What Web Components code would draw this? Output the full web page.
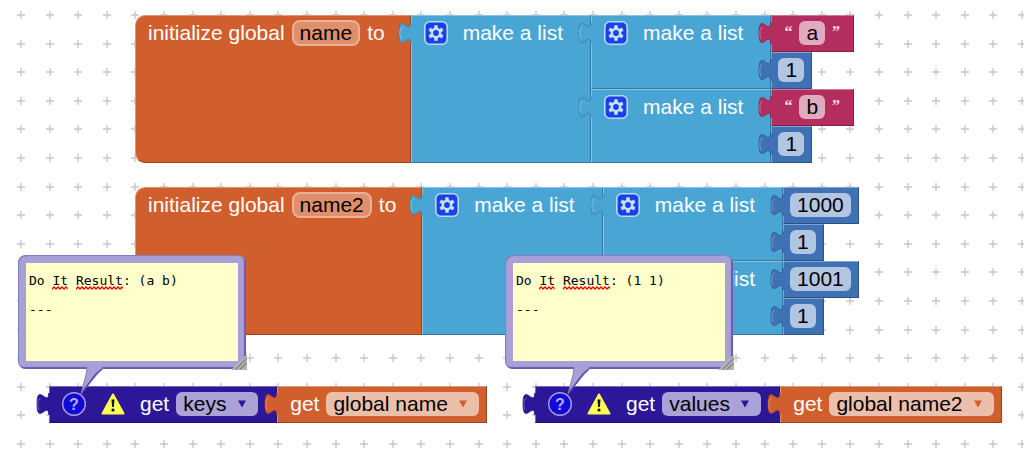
<!DOCTYPE html>
<html lang="en">
<head>
  <meta charset="utf-8">
  <meta name="viewport" content="width=device-width, initial-scale=1">
  <title>Blocks workspace</title>
  <style>
    body {
      margin: 0;
      font-family: "Liberation Sans", Arial, sans-serif;
    }

    /* where each top level item was dropped on the workspace */
    #init-name { left: 135px; top: 15px; }
    #init-name2 { left: 135px; top: 187px; }
    #get-keys { left: 49px; top: 386px; }
    #get-values { left: 535px; top: 386px; }
    #note-keys { left: 18px; top: 255px; }
    #note-values { left: 505px; top: 255px; }
  </style>
</head>
<body>
  <block-workspace>
    <code-block id="init-name" kind="global" hat>
      initialize global <block-field value="name" label="Variable name" outlined></block-field> to
      <code-block slot="input" kind="list">
        <block-icon name="gear"></block-icon> make a list
        <code-block slot="input" kind="list">
          <block-icon name="gear"></block-icon> make a list
          <code-block slot="input" kind="text"><block-quote>“</block-quote><block-field value="a" label="Text"></block-field><block-quote>”</block-quote></code-block>
          <code-block slot="input" kind="number"><block-field value="1" label="Number"></block-field></code-block>
        </code-block>
        <code-block slot="input" kind="list">
          <block-icon name="gear"></block-icon> make a list
          <code-block slot="input" kind="text"><block-quote>“</block-quote><block-field value="b" label="Text"></block-field><block-quote>”</block-quote></code-block>
          <code-block slot="input" kind="number"><block-field value="1" label="Number"></block-field></code-block>
        </code-block>
      </code-block>
    </code-block>

    <code-block id="init-name2" kind="global" hat>
      initialize global <block-field value="name2" label="Variable name" outlined></block-field> to
      <code-block slot="input" kind="list">
        <block-icon name="gear"></block-icon> make a list
        <code-block slot="input" kind="list">
          <block-icon name="gear"></block-icon> make a list
          <code-block slot="input" kind="number"><block-field value="1000" label="Number"></block-field></code-block>
          <code-block slot="input" kind="number"><block-field value="1" label="Number"></block-field></code-block>
        </code-block>
        <code-block slot="input" kind="list">
          <block-icon name="gear"></block-icon> make a list
          <code-block slot="input" kind="number"><block-field value="1001" label="Number"></block-field></code-block>
          <code-block slot="input" kind="number"><block-field value="1" label="Number"></block-field></code-block>
        </code-block>
      </code-block>
    </code-block>

    <code-block id="get-keys" kind="dictionary">
      <block-icon name="help"></block-icon><block-icon name="warning"></block-icon> get
      <block-menu value="keys" label="Dictionary part"></block-menu>
      <code-block slot="input" kind="getter">get <block-menu value="global name" label="Variable"></block-menu></code-block>
    </code-block>

    <code-block id="get-values" kind="dictionary">
      <block-icon name="help"></block-icon><block-icon name="warning"></block-icon> get
      <block-menu value="values" label="Dictionary part"></block-menu>
      <code-block slot="input" kind="getter">get <block-menu value="global name2" label="Variable"></block-menu></code-block>
    </code-block>

    <comment-bubble id="note-keys" flagged="It,Result" text="Do It Result: (a b)&#10;---"></comment-bubble>
    <comment-bubble id="note-values" flagged="It,Result" text="Do It Result: (1 1)&#10;---"></comment-bubble>
  </block-workspace>

  <script>
    class BlockWorkspace extends HTMLElement {
      constructor() {
        super();
        this.attachShadow({ mode: 'open' });
      }

      connectedCallback() {
        // five grid steps fit in one 143px tile
        const steps = [6, 35, 63, 92, 120];
        let crosses = '';
        steps.forEach((y) => {
          steps.forEach((x) => {
            crosses += `M${x - 3} ${y}h8M${x + 1} ${y - 4}v8`;
          });
        });

        this.shadowRoot.innerHTML = `
          <style>
            :host {
              display: block;
              position: relative;
              min-height: 100vh;
              overflow: hidden;
              background: #fff;
            }

            .grid {
              position: absolute;
              inset: 0;
              width: 100%;
              height: 100%;
            }

            ::slotted(*) {
              position: absolute;
            }
          </style>
          <svg class="grid" aria-hidden="true">
            <defs>
              <pattern id="tile" x="14" y="9" width="143" height="143" patternUnits="userSpaceOnUse">
                <path d="${crosses}" stroke="#c8c8c8" stroke-width="1.4" fill="none"/>
              </pattern>
            </defs>
            <rect width="100%" height="100%" fill="url(#tile)"/>
          </svg>
          <slot></slot>
        `;
      }
    }

    class CodeBlock extends HTMLElement {
      constructor() {
        super();
        this.attachShadow({ mode: 'open' });
      }

      connectedCallback() {
        this.shadowRoot.innerHTML = `
          <style>
            :host {
              display: flex;
              position: relative;
              color: #fff;
              font-size: 21px;
              line-height: 24px;
              white-space: nowrap;
              --light: color-mix(in srgb, var(--fill) 65%, white);
              --dark: color-mix(in srgb, var(--fill) 72%, black);
              --field: color-mix(in srgb, var(--fill) 40%, white);
            }

            :host([kind="global"]) { --fill: #d05f2d; --field: #e08f6c; --end: 25px; }
            :host([kind="list"]) { --fill: #49a6d4; --end: 27px; }
            :host([kind="text"]) { --fill: #b32d5e; --end: 13px; }
            :host([kind="number"]) { --fill: #3f71b5; --start: 6px; --end: 7px; }
            :host([kind="dictionary"]) { --fill: #2d1799; --field: #aba2d8; --end: 18px; }
            :host([kind="getter"]) { --fill: #d05f2d; --end: 7px; }

            .head {
              display: flex;
              flex: 1;
              align-items: flex-start;
              gap: 7px;
              box-sizing: border-box;
              min-height: 37px;
              padding: 4px var(--end) 5px var(--start, 12px);
              border: 1px solid;
              border-color: var(--light) var(--dark) var(--dark) var(--light);
              background: var(--fill);
            }

            :host([hat]) .head {
              border-radius: 10px 0 0 10px;
            }

            .inputs {
              display: flex;
              flex-direction: column;
              align-items: flex-start;
            }

            .tab {
              position: absolute;
              left: -12px;
              top: 7px;
              width: 13px;
              height: 22px;
              overflow: visible;
            }

            :host(:not([slot="input"]):not([kind="dictionary"])) .tab {
              display: none;
            }
          </style>
          <div class="head"><slot></slot></div>
          <div class="inputs"><slot name="input"></slot></div>
          <svg class="tab" viewBox="-8 5 9 15" aria-hidden="true">
            <path d="M1.4 5H0c0 10-8-8-8 7.500s8-2.500 8 7.500h1.400z" fill="var(--fill)"/>
            <path d="M0 5c0 10-8-8-8 7.500s8-2.500 8 7.500" fill="none" stroke="var(--dark)" stroke-width=".5"/>
            <path d="M-5.500 8.800C-7 8.800-7.400 10-7.400 12.500q0 3 .8 4.200" fill="none" stroke="var(--light)" stroke-width=".6"/>
          </svg>
        `;
        this.wrapLabels();
      }

      // bare text becomes a span so each label is one flex item
      wrapLabels() {
        [...this.childNodes].forEach((node) => {
          if (node.nodeType !== Node.TEXT_NODE) return;
          const text = node.textContent.trim();
          if (!text) return;
          const span = document.createElement('span');
          span.textContent = text;
          span.style.paddingTop = '1px';
          node.replaceWith(span);
        });
      }
    }

    class BlockField extends HTMLElement {
      constructor() {
        super();
        this.attachShadow({ mode: 'open' });
      }

      connectedCallback() {
        this.shadowRoot.innerHTML = `
          <style>
            :host {
              display: block;
              padding-top: 1px;
            }

            :host([outlined]) {
              padding-top: 0;
            }

            input {
              display: block;
              box-sizing: border-box;
              field-sizing: content;
              height: 24px;
              margin: 0;
              padding: 0 7px;
              border: 0;
              border-radius: 6px;
              outline: 0;
              background: var(--field);
              color: #000;
              font: inherit;
              text-align: center;
            }

            :host([outlined]) input {
              height: 26px;
              padding: 0 6px;
              border: 2px solid #eab197;
              border-radius: 8px;
            }

            input:focus {
              box-shadow: 0 0 0 2px #fc3;
            }
          </style>
          <input type="text" value="${this.getAttribute('value')}" aria-label="${this.getAttribute('label')}" spellcheck="false">
        `;
      }
    }

    class BlockMenu extends HTMLElement {
      constructor() {
        super();
        this.attachShadow({ mode: 'open' });
      }

      connectedCallback() {
        this.shadowRoot.innerHTML = `
          <style>
            :host {
              display: grid;
              align-items: center;
              padding-top: 1px;
            }

            select,
            svg {
              grid-area: 1 / 1;
            }

            select {
              appearance: none;
              height: 24px;
              margin: 0;
              padding: 0 31px 0 7px;
              border: 0;
              border-radius: 6px;
              outline: 0;
              background: var(--field);
              color: #000;
              font: inherit;
              cursor: pointer;
            }

            svg {
              justify-self: end;
              width: 8px;
              height: 8px;
              margin-right: 12px;
              pointer-events: none;
            }
          </style>
          <select aria-label="${this.getAttribute('label')}"><option>${this.getAttribute('value')}</option></select>
          <svg viewBox="0 0 8 8" aria-hidden="true"><path d="M0 .5h8L4 7.500z" fill="var(--fill)"/></svg>
        `;
      }
    }

    class BlockQuote extends HTMLElement {
      constructor() {
        super();
        this.attachShadow({ mode: 'open' });
      }

      connectedCallback() {
        this.shadowRoot.innerHTML = `
          <style>
            :host {
              display: block;
              color: #f6dfe8;
              font-family: "Liberation Serif", "Times New Roman", serif;
              font-size: 16px;
              font-weight: bold;
            }
          </style>
          <slot></slot>
        `;
      }
    }

    const teeth = [0, 60, 120, 180, 240, 300]
      .map((angle) => `<path d="M10.200 8l.5-3.500h2.600l.5 3.500z" transform="rotate(${angle} 12 12)"/>`)
      .join('');

    const icons = {
      gear: `
        <rect x=".8" y=".8" width="22.400" height="22.400" rx="5" fill="#1b3fe8" stroke="#b5dcf0" stroke-width="1.600"/>
        <g fill="#c5e4f5" stroke="#c5e4f5" stroke-width=".6" stroke-linejoin="round">${teeth}<circle cx="12" cy="12" r="5"/></g>
        <circle cx="12" cy="12" r="2.900" fill="#1b3fe8"/>
      `,
      help: `
        <circle cx="12" cy="12" r="11.300" fill="#1008dc" stroke="#aba2d8" stroke-width="1.400"/>
        <text x="12" y="17.500" text-anchor="middle" font-size="16" font-weight="bold" fill="#b8b0e4">?</text>
      `,
      warning: `
        <path d="M12 2.500L22.500 21.500H1.500z" fill="#ffff52" stroke="#ffff52" stroke-width="2" stroke-linejoin="round"/>
        <path d="M10.500 7.500h3l-.6 7.500h-1.800z" fill="#111"/>
        <circle cx="12" cy="18" r="1.600" fill="#111"/>
      `
    };

    class BlockIcon extends HTMLElement {
      constructor() {
        super();
        this.attachShadow({ mode: 'open' });
      }

      connectedCallback() {
        this.shadowRoot.innerHTML = `
          <style>
            :host {
              display: block;
              margin-right: 8px;
              padding-top: 1px;
            }

            svg {
              display: block;
              width: 24px;
              height: 24px;
            }
          </style>
          <svg viewBox="0 0 24 24" aria-hidden="true">${icons[this.getAttribute('name')]}</svg>
        `;
      }
    }

    class CommentBubble extends HTMLElement {
      constructor() {
        super();
        this.attachShadow({ mode: 'open' });
      }

      // a wavy line under each flagged word, measured in characters
      get marks() {
        const text = this.getAttribute('text');
        return this.getAttribute('flagged').split(',').map((word) => `
          <svg class="mark" style="--from: ${text.indexOf(word)}; --count: ${word.length}" aria-hidden="true">
            <rect width="100%" height="4" fill="url(#wave)"/>
          </svg>
        `).join('');
      }

      connectedCallback() {
        this.shadowRoot.innerHTML = `
          <style>
            :host {
              display: block;
              box-sizing: border-box;
              width: 228px;
              padding: 8px;
              border-radius: 8px;
              background: #a8a0d8;
              box-shadow: inset 1px 1px 1px #8378c0, inset -2px -2px 1px #6a5bb0;
              font: 13px/29px "DejaVu Sans Mono", Consolas, monospace;
            }

            textarea {
              display: block;
              box-sizing: border-box;
              width: 100%;
              height: 98px;
              margin: 0;
              padding: 3px;
              border: 0;
              outline: 0;
              resize: none;
              overflow: hidden;
              background: #ffffcc;
              color: #000;
              font: inherit;
            }

            .mark {
              position: absolute;
              left: calc(11px + var(--from) * 1ch);
              top: 31px;
              width: calc(var(--count) * 1ch);
              height: 4px;
              pointer-events: none;
            }

            .tail {
              position: absolute;
              left: 60px;
              top: 112px;
              width: 26px;
              height: 28px;
            }

            .grip {
              position: absolute;
              right: -1px;
              bottom: -1px;
              width: 16px;
              height: 16px;
              cursor: se-resize;
            }

            .defs {
              position: absolute;
              width: 0;
              height: 0;
            }
          </style>
          <svg class="defs" aria-hidden="true">
            <pattern id="wave" width="4" height="4" patternUnits="userSpaceOnUse">
              <path d="M-1 2L0 3L2 1L4 3L5 2" fill="none" stroke="#f00" stroke-width="1.300"/>
            </pattern>
          </svg>
          <textarea aria-label="Comment" spellcheck="false">${this.getAttribute('text')}</textarea>
          ${this.marks}
          <svg class="tail" viewBox="0 0 26 28" aria-hidden="true">
            <path d="M9 0L8.500 6L3 27L24 2.500V0z" fill="#a8a0d8"/>
            <path d="M24 2L18 7L3 27" fill="none" stroke="#5848a4" stroke-width="1.500"/>
            <path d="M9 2L8 8L3 27" fill="none" stroke="#8378c0"/>
          </svg>
          <svg class="grip" viewBox="0 0 16 16" aria-hidden="true">
            <path d="M16 0V16H0z" fill="#b4b4b4"/>
            <path d="M4.500 15.500L15.500 4.500M9 15.500L15.500 9" stroke="#858585" stroke-width="1.400"/>
          </svg>
        `;
      }
    }

    customElements.define('block-workspace', BlockWorkspace);
    customElements.define('block-field', BlockField);
    customElements.define('block-menu', BlockMenu);
    customElements.define('block-quote', BlockQuote);
    customElements.define('block-icon', BlockIcon);
    customElements.define('code-block', CodeBlock);
    customElements.define('comment-bubble', CommentBubble);
  </script>
</body>
</html>
